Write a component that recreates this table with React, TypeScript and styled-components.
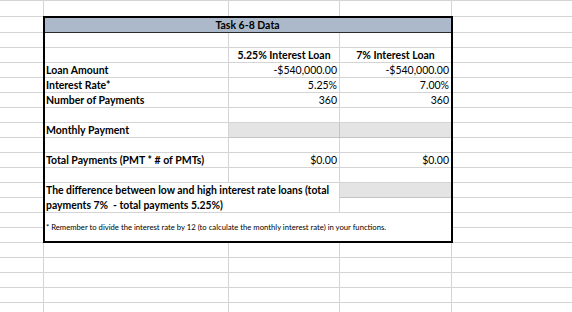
import React from 'react'
import styled, { createGlobalStyle } from 'styled-components'

const GlobalStyle = createGlobalStyle`
  html, body {
    margin: 0;
    padding: 0;
    background: #ffffff;
    overflow: hidden;
  }
  body {
    font-family: Lato, "Liberation Sans", sans-serif;
    color: #000;
  }
`;

const GRID = '#d4d4d4';

// row heights of the visible sheet (px, each includes its bottom gridline)
const ROWS = [16, 16, 15, 15, 15, 15, 15, 15, 15, 15, 15, 15, 15, 15, 15, 15, 15, 15, 15, 15, 15];

const Sheet = styled.div`
  display: grid;
  grid-template-columns: 44px 185px 111px 112px 1fr;
  grid-template-rows: ${ROWS.map(h => `${h}px`).join(' ')};
  border-top: 1px solid ${GRID};
  width: 572px;
  height: 311px;
  overflow: hidden;
`;

type Align = 'left' | 'center' | 'right';

interface CellProps {
  $row: number;
  $col: number;
  $span?: number;
  $rows?: number;
  $align?: Align;
  $bold?: boolean;
  $last?: boolean;
}

const Cell = styled.div<CellProps>`
  grid-row: ${p => p.$row + 1} / span ${p => p.$rows ?? 1};
  grid-column: ${p => p.$col + 1} / span ${p => p.$span ?? 1};
  box-sizing: border-box;
  border-right: ${p => (p.$last ? 'none' : `1px solid ${GRID}`)};
  border-bottom: 1px solid ${GRID};
  background: #fff;
  display: flex;
  align-items: center;
  justify-content: ${p => (p.$align === 'right' ? 'flex-end' : p.$align === 'center' ? 'center' : 'flex-start')};
  padding: 0 2px;
  font-size: 10.5px;
  line-height: 13px;
  font-weight: ${p => (p.$bold ? 700 : 400)};
  white-space: nowrap;
`;

const TitleCell = styled(Cell)`
  background: #acb9ca;
  border-bottom: 1px solid #2b2b2b;
  padding-top: 1px;
`;

const ShadedCell = styled(Cell)`
  background: #e4e4e4;
  border-right-color: #c4c4c4;
  border-bottom-color: #c4c4c4;
`;

const NoteCell = styled(Cell)`
  display: block;
  line-height: 15px;
  font-size: 10.4px;
  padding-top: 0;
`;

const Footnote = styled(Cell)`
  font-size: 7.7px;
  padding-left: 2px;
`;

// thick outline around the data block, placed over the cells in the grid
const Frame = styled.div`
  grid-row: 2 / 17;
  grid-column: 2 / 5;
  margin: -1px -1px 0 -1px;
  border: 2px solid #000;
  pointer-events: none;
  z-index: 2;
`;

interface Entry {
  text?: string;
  bold?: boolean;
  align?: Align;
  shaded?: boolean;
}

// the table rows that carry content, keyed by sheet row
const data: Record<number, Entry[]> = {
  3: [{}, { text: '5.25% Interest Loan', bold: true, align: 'center' }, { text: '7% Interest Loan', bold: true, align: 'center' }],
  4: [{ text: 'Loan Amount', bold: true }, { text: '-$540,000.00', align: 'right' }, { text: '-$540,000.00', align: 'right' }],
  5: [{ text: 'Interest Rate*', bold: true }, { text: '5.25%', align: 'right' }, { text: '7.00%', align: 'right' }],
  6: [{ text: 'Number of Payments', bold: true }, { text: '360', align: 'right' }, { text: '360', align: 'right' }],
  8: [{ text: 'Monthly Payment', bold: true }, { shaded: true }, { shaded: true }],
  10: [{ text: 'Total Payments (PMT * # of PMTs)', bold: true }, { text: '$0.00', align: 'right' }, { text: '$0.00', align: 'right' }],
};

function App() {
  const cells: React.ReactNode[] = [];

  ROWS.forEach((_, r) => {
    // column A and E are always plain sheet cells
    cells.push(<Cell key={`a${r}`} $row={r} $col={0} />);
    cells.push(<Cell key={`e${r}`} $row={r} $col={4} $last />);

    if (r === 1) {
      cells.push(
        <TitleCell key="title" $row={1} $col={1} $span={3} $align="center" $bold>
          Task 6-8 Data
        </TitleCell>
      );
      return;
    }
    if (r === 12) {
      cells.push(
        <NoteCell key="diff" $row={12} $col={1} $span={2} $rows={2} $bold>
          The difference between low and high interest rate loans (total
          <br />
          payments 7% &nbsp;- total payments 5.25%)
        </NoteCell>
      );
      cells.push(<ShadedCell key="diffval" $row={12} $col={3} />);
      return;
    }
    if (r === 13) {
      cells.push(<Cell key="d13" $row={13} $col={3} />);
      return;
    }
    if (r === 14) {
      cells.push(
        <Footnote key="foot" $row={14} $col={1} $span={3} $rows={2}>
          * Remember to divide the interest rate by 12 (to calculate the monthly interest rate) in your functions.
        </Footnote>
      );
      return;
    }
    if (r === 15) return;

    const row = data[r] ?? [{}, {}, {}];
    row.forEach((entry, i) => {
      const Comp = entry.shaded ? ShadedCell : Cell;
      cells.push(
        <Comp key={`${r}-${i}`} $row={r} $col={i + 1} $align={entry.align} $bold={entry.bold}>
          {entry.text}
        </Comp>
      );
    });
  });

  return (
    <>
      <GlobalStyle />
      <Sheet>
        {cells}
        <Frame />
      </Sheet>
    </>
  );
}

export default App
